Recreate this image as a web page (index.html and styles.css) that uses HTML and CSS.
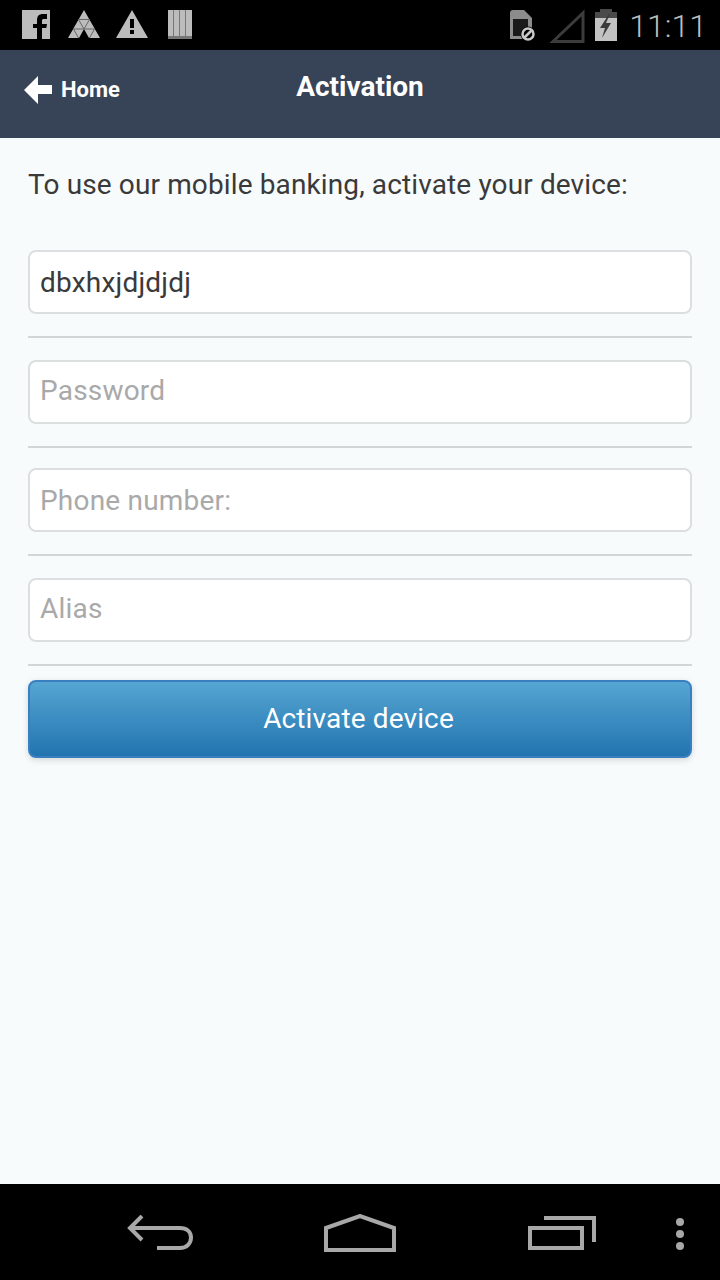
FILE: index.html
```html
<!DOCTYPE html>
<html lang="en">
<head>
  <meta charset="UTF-8" />
  <meta name="viewport" content="width=device-width, initial-scale=1.0"/>
  <title>Activation</title>
  <link rel="stylesheet" href="styles.css">
</head>
<body>

<div class="status-bar">
  <div class="status-left">
    <svg class="icon-f" width="28" height="30" viewBox="0 0 28 30"><path fill="#bcbcbc" fill-rule="evenodd" d="M0 1h28v29H0zM15 30V19h-4v-4h4v-4c0-4 2-6 6-6h4v5h-3c-1.500 0-2 .5-2 2v3h5l-.7 4H20v11z"/></svg>
    <svg class="icon-tri" width="34" height="30" viewBox="0 0 34 30"><path fill="#bcbcbc" d="M17 1l16 28H22l-5-9-5 9H1z"/><path fill="none" stroke="#666" stroke-width="1" d="M11.500 10.500h11M6.500 20h21M11.500 10.500L17 20l5.500-9.500M6.500 20l5 9M27.500 20l-5 9"/></svg>
    <svg class="icon-warn" width="32" height="30" viewBox="0 0 32 30"><path fill="#bcbcbc" fill-rule="evenodd" d="M16 1l16 28H0zM14 10v9h4v-9zM14 21v4h4v-4z"/></svg>
    <svg class="icon-bars" width="24" height="30" viewBox="0 0 24 30"><path fill="#777" d="M0 1h24v29H0z"/><path fill="#bcbcbc" d="M0 1h5v26H0zM6 1h5v26H6zM12 1h5v26h-5zM18 1h6v26h-6z"/></svg>
  </div>
  <div class="status-right">
    <svg class="icon-sim" width="26" height="32" viewBox="0 0 26 32"><path fill="#8c8c8c" fill-rule="evenodd" d="M0 4q0-3 3-3h11l8 8v21H0zM3 10v17h15V10z"/><path fill="#1a1a1a" d="M3 10h15v17H3z"/><circle cx="18" cy="25" r="7.500" fill="#000"/><circle cx="18" cy="25" r="5.500" fill="none" stroke="#c8c8c8" stroke-width="2.500"/><path stroke="#c8c8c8" stroke-width="2.500" d="M14 29l8-8"/></svg>
    <svg class="icon-signal" width="36" height="34" viewBox="0 0 36 34"><path fill="none" stroke="#3c3c3c" stroke-width="3" d="M4 32.500L34 4v28.500z"/></svg>
    <svg class="icon-batt" width="22" height="32" viewBox="0 0 22 32"><path fill="#4a4a4a" d="M5 0h12v3h5v6H0V3h5z"/><path fill="#c2c2c2" d="M0 9h22v23H0z"/><path fill="#3a3a3a" d="M14 5L5 19h5l-3 10 9-15h-5l4-9z"/></svg>
    <span class="clock">11:11</span>
  </div>
</div>

<header class="top-bar">
  <a class="back-link">
    <svg width="28" height="28" viewBox="0 0 28 28"><path fill="#fff" d="M0 14L14 0v9h14v9H14v10z"/></svg>
    <span>Home</span>
  </a>
  <h1>Activation</h1>
</header>

<main>
  <p class="intro">To use our mobile banking, activate your device:</p>

  <div class="field"><input type="text" value="dbxhxjdjdjdj" /></div>
  <div class="field field-short"><input type="password" placeholder="Password" /></div>
  <div class="field"><input type="text" placeholder="Phone number:" /></div>
  <div class="field field-last"><input type="text" placeholder="Alias" /></div>

  <button class="activate">Activate device</button>
</main>

<footer class="nav-bar">
  <svg class="nav-back" width="66" height="36" viewBox="0 0 66 36"><path fill="none" stroke="#a8a8a8" stroke-width="4" d="M15 1L3 13l12 12M3 13h50c7 0 11 4 11 9.500S60 33 53 33H30"/></svg>
  <svg class="nav-home" width="72" height="38" viewBox="0 0 72 38"><path fill="none" stroke="#a8a8a8" stroke-width="4" d="M2 14L36 2l34 12v22H2z"/></svg>
  <svg class="nav-recent" width="68" height="34" viewBox="0 0 68 34"><path fill="none" stroke="#a8a8a8" stroke-width="4" d="M2 12h52v20H2zM16 2h50v24"/></svg>
  <svg class="nav-menu" width="8" height="32" viewBox="0 0 8 32"><circle cx="4" cy="4" r="4" fill="#a8a8a8"/><circle cx="4" cy="16" r="4" fill="#a8a8a8"/><circle cx="4" cy="28" r="4" fill="#a8a8a8"/></svg>
</footer>

</body>
</html>
```

FILE: styles.css
```css
* {
  box-sizing: border-box;
}

body {
  font-family: Roboto, sans-serif;
  background: #f7fbfc;
  margin: 0;
  padding: 0;
  color: #3a3a3a;
  width: 720px;
  height: 1280px;
  display: flex;
  flex-direction: column;
  overflow: hidden;
}

.status-bar {
  height: 50px;
  background: #000;
  display: flex;
  justify-content: space-between;
  padding: 9px 13px 0 22px;
}

.status-left {
  display: flex;
  align-items: flex-start;
}

.icon-tri {
  margin-left: 17px;
}

.icon-warn {
  margin-left: 15px;
}

.icon-bars {
  margin-left: 20px;
}

.status-right {
  display: flex;
  align-items: flex-start;
}

.icon-signal {
  margin-left: 13px;
}

.icon-batt {
  margin-left: 10px;
}

.clock {
  margin-left: 12px;
  font-size: 32px;
  font-weight: 300;
  line-height: 34px;
  letter-spacing: 0;
  color: #bdbdbd;
}

.top-bar {
  height: 88px;
  background: #374357;
  display: flex;
  align-items: center;
  justify-content: center;
  position: relative;
  color: #fff;
}

.top-bar h1 {
  margin: 0 0 15px;
  font-size: 28px;
  font-weight: 700;
}

.back-link {
  position: absolute;
  left: 24px;
  top: 26px;
  display: flex;
  align-items: center;
  gap: 9px;
  font-size: 22px;
  font-weight: 700;
}

.back-link span {
  margin-top: -2px;
}

main {
  flex: 1;
  padding: 0 28px;
}

.intro {
  margin: 0;
  padding-top: 29px;
  height: 112px;
  font-size: 28px;
  line-height: 35px;
  letter-spacing: 0.125px;
}

.field {
  height: 110px;
  padding-bottom: 22px;
}

.field::after {
  content: "";
  display: block;
  height: 2px;
  margin-top: 22px;
  background: #d2d6d6;
}

.field-short {
  height: 108px;
}

.field-last {
  height: 88px;
}

.field input {
  display: block;
  width: 100%;
  height: 64px;
  padding: 0 10px;
  background: #fff;
  border: 2px solid #dcdfdf;
  border-radius: 8px;
  font-family: Roboto, sans-serif;
  font-size: 28px;
  letter-spacing: 0.2px;
  color: #3a3a3a;
  outline: none;
}

.field-short input,
.field-last input {
  padding-bottom: 4px;
}

.field input::placeholder {
  color: #a9a9a9;
  opacity: 1;
}

.activate {
  display: block;
  width: 100%;
  height: 78px;
  margin-top: 14px;
  padding: 0 3px 2px 0;
  background: linear-gradient(#55a6d2, #2274b0);
  border: 2px solid #3a80c0;
  border-radius: 8px;
  box-shadow: 0 2px 6px rgba(0,0,0,0.15);
  font-family: Roboto, sans-serif;
  font-size: 28px;
  letter-spacing: 0.13px;
  color: #fff;
}

.nav-bar {
  height: 96px;
  background: #000;
  display: flex;
  align-items: center;
  padding-left: 127px;
}

.nav-back {
  margin-top: 1px;
}

.nav-home {
  margin-left: 131px;
  margin-top: 1px;
}

.nav-recent {
  margin-left: 132px;
  margin-top: 2px;
}

.nav-menu {
  margin-left: 80px;
  margin-top: 3px;
}
```
